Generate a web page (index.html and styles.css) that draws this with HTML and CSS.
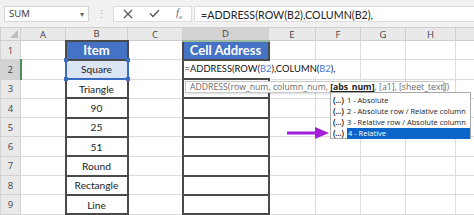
FILE: index.html
```html
<!DOCTYPE html>
<html lang="en">
<head>
  <meta charset="UTF-8" />
  <title>ADDRESS function</title>
  <link rel="stylesheet" href="styles.css">
</head>
<body>
  <div class="bar">
    <div class="name-box"><span>SUM</span><span class="caret">&#9662;</span></div>
    <div class="grip">&#8942;</div>
    <div class="fx-box">
      <svg width="10" height="10" viewBox="0 0 10 10"><path d="M1 1 L9 9 M9 1 L1 9" stroke="#555" stroke-width="1.2" fill="none"/></svg>
      <svg width="11" height="9" viewBox="0 0 11 9"><path d="M1 4.5 L4 7.5 L10 1" stroke="#555" stroke-width="1.3" fill="none"/></svg>
      <span class="fx">f<sub>x</sub></span>
    </div>
    <div class="formula">=ADDRESS(ROW(B2),COLUMN(B2),</div>
  </div>

  <div class="sheet">
    <table class="grid">
      <colgroup>
        <col style="width:20px"><col style="width:45px"><col style="width:62px"><col style="width:55px">
        <col style="width:86px"><col style="width:47px"><col style="width:45px"><col style="width:45px">
        <col style="width:50px"><col style="width:40px">
      </colgroup>
      <tr class="head">
        <th class="corner"><span class="tri"></span></th>
        <th>A</th><th>B</th><th>C</th><th class="sel">D</th><th>E</th><th>F</th><th>G</th><th>H</th><th></th>
      </tr>
      <tr>
        <th class="num">1</th><td></td><td class="box title">Item</td><td></td><td class="box title">Cell Address</td>
        <td></td><td></td><td></td><td></td><td></td>
      </tr>
      <tr>
        <th class="num sel">2</th><td></td>
        <td class="box ref">Square<i class="h tl"></i><i class="h tr"></i><i class="h bl"></i><i class="h br"></i></td>
        <td></td>
        <td class="box edit"><span class="entry">=ADDRESS(ROW(<b>B2</b>),COLUMN(<b>B2</b>),</span></td>
        <td></td><td></td><td></td><td></td><td></td>
      </tr>
      <tr>
        <th class="num">3</th><td></td><td class="box">Triangle</td><td></td><td class="box"></td>
        <td></td><td></td><td></td><td></td><td></td>
      </tr>
      <tr>
        <th class="num">4</th><td></td><td class="box">90</td><td></td><td class="box"></td>
        <td></td><td></td><td></td><td></td><td></td>
      </tr>
      <tr>
        <th class="num">5</th><td></td><td class="box">25</td><td></td><td class="box"></td>
        <td></td><td></td><td></td><td></td><td></td>
      </tr>
      <tr>
        <th class="num">6</th><td></td><td class="box">51</td><td></td><td class="box"></td>
        <td></td><td></td><td></td><td></td><td></td>
      </tr>
      <tr>
        <th class="num">7</th><td></td><td class="box">Round</td><td></td><td class="box"></td>
        <td></td><td></td><td></td><td></td><td></td>
      </tr>
      <tr>
        <th class="num">8</th><td></td><td class="box">Rectangle</td><td></td><td class="box"></td>
        <td></td><td></td><td></td><td></td><td></td>
      </tr>
      <tr>
        <th class="num">9</th><td></td><td class="box">Line</td><td></td><td class="box"></td>
        <td></td><td></td><td></td><td></td><td></td>
      </tr>
    </table>
  </div>

  <div class="tip">ADDRESS(row_num, column_num, <u>[abs_num]</u>, [a1], [sheet_text])</div>

  <div class="list">
    <div class="item"><span class="ico">(...)</span><span>1 - Absolute</span></div>
    <div class="item"><span class="ico">(...)</span><span>2 - Absolute row / Relative column</span></div>
    <div class="item"><span class="ico">(...)</span><span>3 - Relative row / Absolute column</span></div>
    <div class="item on"><span class="ico">(...)</span><span>4 - Relative</span></div>
  </div>

  <svg class="arrow" width="44" height="14" viewBox="0 0 44 14">
    <path d="M0 7 H30" stroke="#a11fd8" stroke-width="3"/>
    <path d="M28 1 L42 7 L28 13 Z" fill="#a11fd8"/>
  </svg>
</body>
</html>
```

FILE: styles.css
```css
body {
  margin: 0;
  width: 474px;
  height: 215px;
  overflow: hidden;
  background: #fff;
  font-family: Lato, 'Open Sans', sans-serif;
  color: #222;
}
.bar {
  height: 27px;
  background: #f1f1f1;
  display: flex;
  align-items: center;
  padding-left: 4px;
  font-family: 'Open Sans', sans-serif;
}
.name-box {
  width: 85px;
  height: 16px;
  background: #fff;
  border: 1px solid #d6d6d6;
  display: flex;
  align-items: center;
  justify-content: space-between;
  padding: 0 4px 0 4px;
  box-sizing: border-box;
  font-size: 9.5px;
  color: #333;
}
.caret {
  font-size: 8px;
  color: #666;
}
.grip {
  width: 24px;
  text-align: center;
  color: #aaa;
  font-size: 11px;
}
.fx-box {
  width: 79px;
  height: 16px;
  background: #fff;
  border: 1px solid #dcdcdc;
  box-sizing: border-box;
  display: flex;
  align-items: center;
  gap: 16px;
  padding-left: 9px;
}
.fx {
  font-family: 'Liberation Serif', serif;
  font-style: italic;
  font-size: 11px;
  color: #666;
}
.fx sub {
  font-size: 7px;
}
.formula {
  flex: 1;
  height: 16px;
  margin-left: 2px;
  background: #fff;
  border: 1px solid #dcdcdc;
  border-right: none;
  box-sizing: border-box;
  padding-left: 6px;
  font-family: Lato, sans-serif;
  font-size: 10.7px;
  line-height: 15px;
  white-space: nowrap;
  overflow: hidden;
}
.sheet {
  overflow: hidden;
}
.grid {
  border-collapse: collapse;
  table-layout: fixed;
  width: 495px;
}
.grid th,
.grid td {
  padding: 0;
  border: 1px solid #dcdcdc;
  text-align: center;
  vertical-align: middle;
  white-space: nowrap;
}
.grid tr {
  height: 19.3px;
}
.grid tr.head {
  height: 13px;
}
.head th {
  background: #e9e9e9;
  border-color: #cfcfcf;
  font-family: 'Open Sans', sans-serif;
  font-weight: normal;
  font-size: 9.5px;
  color: #444;
  line-height: 11px;
}
.head th.sel {
  background: #d3d3d3;
  border-bottom: 2px solid #9bb89f;
}
.corner {
  position: relative;
}
.tri {
  position: absolute;
  right: 2px;
  bottom: 2px;
  width: 0;
  height: 0;
  border-left: 8px solid transparent;
  border-bottom: 8px solid #bcbcbc;
}
th.num {
  background: #e9e9e9;
  border-color: #d2d2d2;
  font-family: 'Open Sans', sans-serif;
  font-weight: normal;
  font-size: 9.5px;
  color: #444;
}
th.num.sel {
  background: #d3d3d3;
  border-right: 2px solid #4f8c5c;
}
.grid td.box {
  border: 2px solid #4a4a4a;
  font-size: 10.2px;
  color: #222;
}
.grid td.title {
  background: #4472c4;
  color: #fff;
  font-weight: bold;
  font-size: 13px;
}
.grid td.ref {
  position: relative;
  background: #dbe5f5;
  border: 2px solid #3a6cc4;
}
.h {
  position: absolute;
  width: 4px;
  height: 4px;
  background: #3a6cc4;
}
.tl { left: -3px; top: -3px; }
.tr { right: -3px; top: -3px; }
.bl { left: -3px; bottom: -3px; }
.br { right: -3px; bottom: -3px; }
.grid td.edit {
  text-align: left;
  border-right-color: #fff;
}
.entry {
  position: relative;
  z-index: 1;
  display: inline-block;
  background: #fff;
  padding: 0 5px 0 1px;
  font-family: Lato, sans-serif;
  font-size: 9.4px;
  line-height: 16px;
  color: #111;
}
.entry b {
  font-weight: normal;
  color: #4a7bd0;
}
.tip {
  position: absolute;
  left: 185px;
  top: 81px;
  width: 259px;
  height: 12px;
  box-sizing: border-box;
  background: #fff;
  border: 1px solid #c8c8c8;
  box-shadow: 1px 1px 2px rgba(0, 0, 0, 0.15);
  padding-left: 4px;
  font-family: 'Open Sans', sans-serif;
  font-size: 8.7px;
  line-height: 10px;
  color: #6a6a6a;
  white-space: nowrap;
  z-index: 2;
}
.tip u {
  font-weight: bold;
  color: #222;
}
.list {
  position: absolute;
  left: 330px;
  top: 92px;
  width: 141px;
  height: 47px;
  box-sizing: border-box;
  background: #fff;
  border: 1px solid #a8a8a8;
  padding: 1px 0 0 2px;
  font-family: 'Open Sans', sans-serif;
  z-index: 3;
}
.item {
  display: flex;
  align-items: center;
  height: 11.2px;
  font-size: 7.5px;
  color: #222;
  white-space: nowrap;
}
.ico {
  width: 14px;
  font-size: 8.6px;
  font-weight: 600;
  letter-spacing: -0.4px;
}
.item.on span:last-child {
  flex: 1;
  background: #0a64c9;
  color: #fff;
  height: 11px;
  line-height: 11px;
  padding-left: 1px;
}
.arrow {
  position: absolute;
  left: 287px;
  top: 126px;
  z-index: 3;
}
```
